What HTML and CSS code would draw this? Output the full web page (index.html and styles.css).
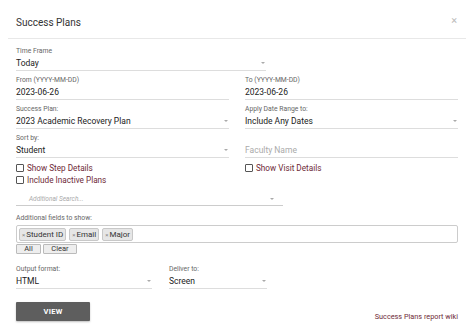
FILE: index.html
```html
<!DOCTYPE html>
<html lang="en">

<head>
    <meta charset="UTF-8">
    <meta name="viewport" content="width=device-width, initial-scale=1.0">
    <title>Success Plans</title>
    <link rel="stylesheet" href="styles.css">
</head>

<body>

    <div class="modal">
        <div class="modal-header">
            <h2>Success Plans</h2>
            <span class="close">&times;</span>
        </div>

        <div class="modal-body">
            <div class="field time-frame">
                <label>Time Frame</label>
                <div class="select">Today<span class="caret"></span></div>
            </div>

            <div class="row">
                <div class="field">
                    <label>From (YYYY-MM-DD)</label>
                    <div class="input">2023-06-26</div>
                </div>
                <div class="field">
                    <label>To (YYYY-MM-DD)</label>
                    <div class="input">2023-06-26</div>
                </div>
            </div>

            <div class="row">
                <div class="field">
                    <label>Success Plan:</label>
                    <div class="select">2023 Academic Recovery Plan<span class="caret"></span></div>
                </div>
                <div class="field">
                    <label>Apply Date Range to:</label>
                    <div class="select">Include Any Dates<span class="caret"></span></div>
                </div>
            </div>

            <div class="row">
                <div class="field">
                    <label>Sort by:</label>
                    <div class="select">Student<span class="caret"></span></div>
                </div>
                <div class="field">
                    <label>&nbsp;</label>
                    <div class="input placeholder">Faculty Name</div>
                </div>
            </div>

            <div class="row checks">
                <div>
                    <div class="check"><span class="box"></span>Show Step Details</div>
                    <div class="check"><span class="box"></span>Include Inactive Plans</div>
                </div>
                <div>
                    <div class="check"><span class="box"></span>Show Visit Details</div>
                </div>
            </div>

            <div class="search">
                <div class="select">Additional Search...<span class="caret"></span></div>
            </div>

            <div class="fields-show">
                <label>Additional fields to show:</label>
                <div class="tag-box">
                    <span class="tag"><span class="x">&times;</span>Student ID</span>
                    <span class="tag"><span class="x">&times;</span>Email</span>
                    <span class="tag"><span class="x">&times;</span>Major</span>
                </div>
                <div class="small-btns">
                    <button class="small-btn">All</button>
                    <button class="small-btn">Clear</button>
                </div>
            </div>

            <div class="output-row">
                <div class="field output-format">
                    <label>Output format:</label>
                    <div class="select">HTML<span class="caret"></span></div>
                </div>
                <div class="field deliver-to">
                    <label>Deliver to:</label>
                    <div class="select">Screen<span class="caret"></span></div>
                </div>
            </div>

            <div class="footer">
                <button class="view-btn">VIEW</button>
                <a class="wiki" href="#">Success Plans report wiki</a>
            </div>
        </div>
    </div>

</body>

</html>
```

FILE: styles.css
```css
body {
    font-family: 'Roboto', 'Liberation Sans', sans-serif;
    margin: 0;
    background: #fff;
    color: #222;
}

.modal {
    width: 474px;
    height: 332px;
    background: #fff;
    overflow: hidden;
}

.modal-header {
    height: 38px;
    margin: 0 8px;
    padding: 0 8px;
    border-bottom: 1px solid #e8e8e8;
    display: flex;
    align-items: center;
    justify-content: space-between;
}

.modal-header h2 {
    margin: 0;
    padding-top: 6px;
    font-size: 10px;
    font-weight: 400;
    color: #333;
}

.close {
    color: #bbb;
    font-size: 11px;
    margin-right: 1px;
    padding-top: 2px;
}

.modal-body {
    padding: 7px 16px 0 16px;
}

.row {
    display: grid;
    grid-template-columns: 1fr 1fr;
    column-gap: 16px;
}

.field {
    margin-bottom: 4px;
}

.field label,
.fields-show label {
    display: block;
    height: 9px;
    line-height: 10px;
    font-size: 6.8px;
    color: #666;
}

.select,
.input {
    position: relative;
    height: 15px;
    line-height: 16px;
    font-size: 8.5px;
    color: #222;
    border-bottom: 1px solid #ddd;
}

.placeholder {
    color: #aaa;
}

.caret {
    position: absolute;
    right: 1px;
    top: 7px;
    width: 0;
    height: 0;
    border-left: 2px solid transparent;
    border-right: 2px solid transparent;
    border-top: 2px solid #aaa;
}

.time-frame {
    width: 250px;
}

.check {
    display: flex;
    align-items: center;
    height: 12px;
    font-size: 8.2px;
    color: #6e2a37;
}

.box {
    width: 6px;
    height: 6px;
    border: 1px solid #555;
    border-radius: 1px;
    margin-right: 3px;
    background: #fff;
}

.search {
    width: 267px;
    margin-top: 6px;
}

.search .select {
    height: 13px;
    line-height: 14px;
    padding-left: 13px;
    font-size: 6.5px;
    font-style: italic;
    color: #aaa;
    border-bottom: 1px solid #ccc;
}

.search .caret {
    right: 9px;
    top: 6px;
}

.fields-show {
    margin-top: 7px;
}

.tag-box {
    height: 16px;
    margin-top: 3px;
    border: 1px solid #ccc;
    border-radius: 2px;
    display: flex;
    align-items: center;
    padding-left: 2px;
    gap: 3px;
}

.tag {
    height: 11px;
    line-height: 11px;
    padding: 0 2px;
    font-size: 8px;
    color: #333;
    background: #e6e6e6;
    border: 1px solid #c8c8c8;
    border-radius: 2px;
}

.x {
    color: #888;
    font-size: 6px;
    margin-right: 1px;
}

.small-btns {
    display: flex;
    gap: 2px;
    margin-top: 1px;
}

.small-btn {
    width: 25px;
    height: 10px;
    padding: 0;
    font-family: inherit;
    font-size: 7.5px;
    line-height: 8px;
    color: #333;
    background: #eee;
    border: 1px solid #bbb;
    border-radius: 1px;
}

.small-btn + .small-btn {
    width: 34px;
}

.output-row {
    display: flex;
    gap: 17px;
    margin-top: 10px;
}

.output-format {
    width: 136px;
}

.deliver-to {
    width: 98px;
}

.footer {
    display: flex;
    justify-content: space-between;
    align-items: flex-end;
    margin-top: 9px;
}

.view-btn {
    width: 74px;
    height: 19px;
    background: #5e5e5e;
    color: #fff;
    border: none;
    border-radius: 1px;
    font-family: inherit;
    font-size: 7.5px;
    font-weight: 700;
    letter-spacing: 0.3px;
    padding: 0;
    box-shadow: 0 1px 2px rgba(0, 0, 0, 0.25);
}

.wiki {
    font-size: 7.3px;
    color: #6e2a37;
    text-decoration: none;
    margin-bottom: 0;
}
```
